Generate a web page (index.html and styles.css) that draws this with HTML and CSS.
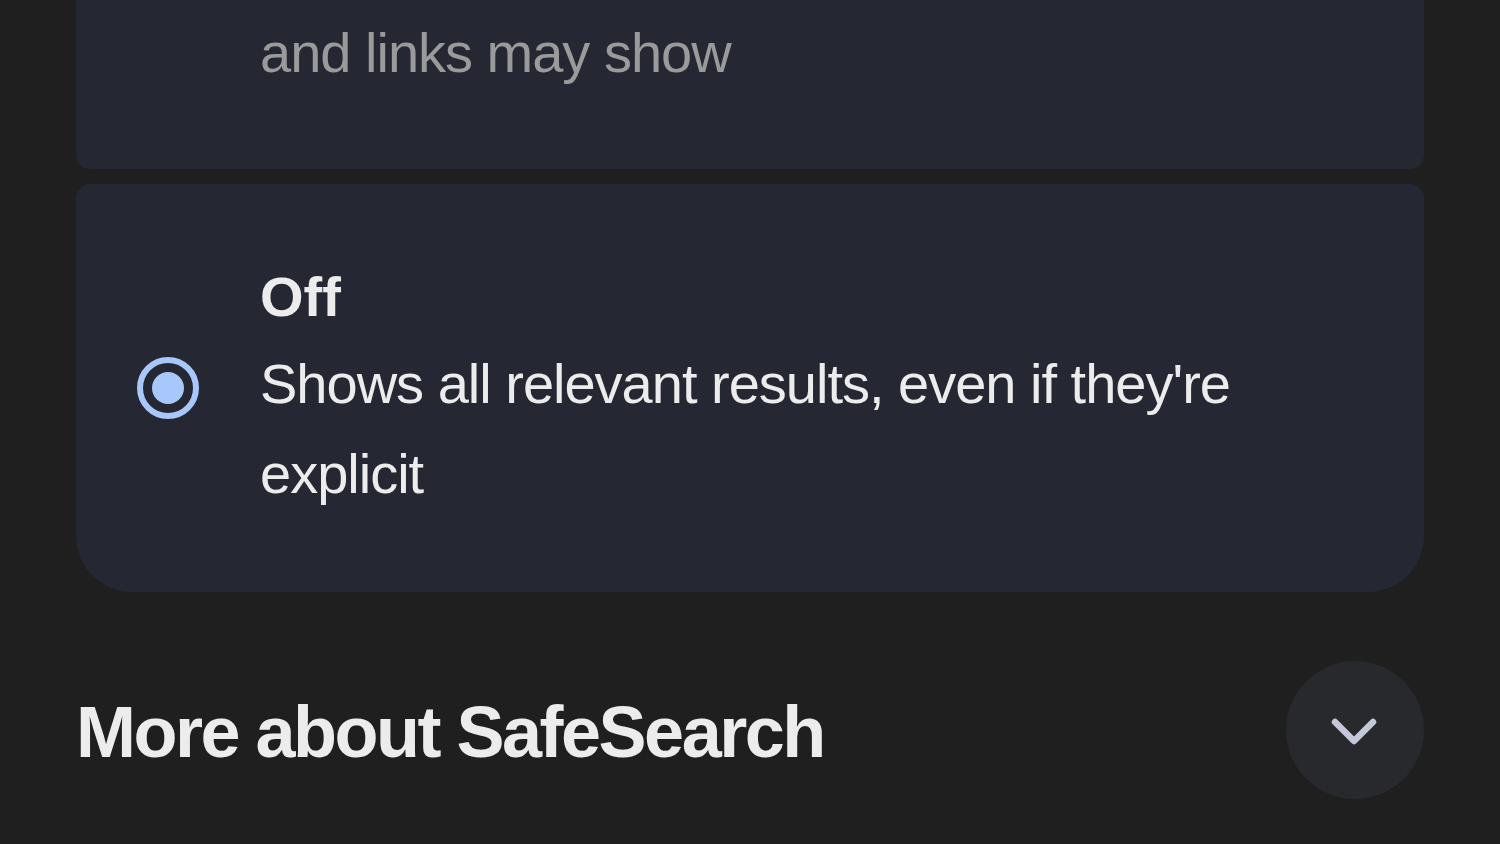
FILE: index.html
```html
<!DOCTYPE html>
<html>
<head>
<meta charset="utf-8">
<link rel="stylesheet" href="styles.css">
</head>
<body>
<div class="page">
  <div class="card card-top">
    <p class="desc muted">and links may show</p>
  </div>
  <div class="card card-option">
    <div class="radio"><span class="dot"></span></div>
    <div class="option-text">
      <div class="title">Off</div>
      <p class="desc">Shows all relevant results, even if they're explicit</p>
    </div>
  </div>
  <div class="more">
    <h2 class="more-title">More about SafeSearch</h2>
    <button class="expand" aria-label="Expand">
      <svg width="50" height="32" viewBox="0 0 50 32"><path d="M5 8 L24 27 L43 8" fill="none" stroke="#c5c8da" stroke-width="6.5" stroke-linecap="round" stroke-linejoin="round"/></svg>
    </button>
  </div>
</div>
</body>
</html>
```
FILE: styles.css
```css
html, body {
  margin: 0;
  padding: 0;
  background: #1f1f1f;
  font-family: "Liberation Sans", Arial, sans-serif;
}
.page {
  padding: 0 76px;
  height: 844px;
  overflow: hidden;
}
.card {
  background: #252833;
}
.card-top {
  height: 169px;
  border-radius: 0 0 14px 14px;
  padding-left: 184px;
  box-sizing: border-box;
}
.desc {
  margin: 0;
  font-size: 56px;
  letter-spacing: -1px;
  line-height: 90px;
  color: #ececec;
  max-width: 1000px;
}
.muted {
  color: #9a9a9b;
  padding-top: 8px;
}
.card-option {
  margin-top: 15px;
  height: 408px;
  border-radius: 14px 14px 56px 56px;
  display: flex;
  align-items: center;
  padding-left: 61px;
  box-sizing: border-box;
}
.radio {
  width: 62px;
  height: 62px;
  box-sizing: border-box;
  border: 6px solid #a8c7fa;
  border-radius: 50%;
  display: flex;
  align-items: center;
  justify-content: center;
  flex: none;
  margin-right: 61px;
}
.dot {
  width: 32px;
  height: 32px;
  border-radius: 50%;
  background: #a8c7fa;
}
.option-text {
  padding-top: 11px;
}
.title {
  font-size: 56px;
  font-weight: bold;
  color: #ececec;
  line-height: 70px;
  margin-bottom: 7px;
  margin-top: -6px;
}
.more {
  display: flex;
  align-items: center;
  justify-content: space-between;
  margin-top: 69px;
}
.more-title {
  margin: 0;
  font-size: 72px;
  font-weight: bold;
  color: #ececec;
  letter-spacing: -2.5px;
  padding-top: 4px;
}
.expand {
  width: 138px;
  height: 138px;
  border-radius: 50%;
  border: none;
  background: #28292c;
  display: flex;
  align-items: center;
  justify-content: center;
  padding: 0;
}
```
